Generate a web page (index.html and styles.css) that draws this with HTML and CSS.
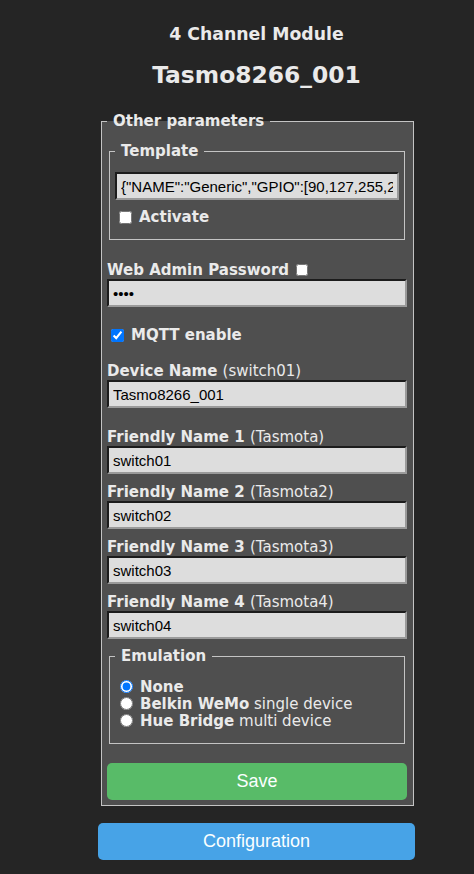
FILE: index.html
```html
<!DOCTYPE html>
<html lang="en">
<head>
<meta charset="utf-8">
<title>Tasmo8266_001 - Other parameters</title>
<link rel="stylesheet" href="styles.css">
</head>
<body>
<div class="wrap">
  <h3 class="module">4 Channel Module</h3>
  <h2 class="device">Tasmo8266_001</h2>
  <form class="form">
    <fieldset class="outer">
      <legend>Other parameters</legend>
      <fieldset class="inner tpl">
        <legend>Template</legend>
        <input class="field" type="text" value='{"NAME":"Generic","GPIO":[90,127,255,21,22,23,0,0,24,255,255,255,255],"FLAG":1,"BASE":18}'>
        <label class="check act"><input type="checkbox"><span>Activate</span></label>
      </fieldset>
      <div class="group pw">
        <label class="lbl">Web Admin Password <input type="checkbox" class="show"></label>
        <input class="field" type="password" value="1234">
      </div>
      <label class="check mqtt"><input type="checkbox" checked><span>MQTT enable</span></label>
      <div class="group dev">
        <label class="lbl">Device Name <span class="def">(switch01)</span></label>
        <input class="field" type="text" value="Tasmo8266_001">
      </div>
      <div class="group fn first">
        <label class="lbl">Friendly Name 1 <span class="def">(Tasmota)</span></label>
        <input class="field" type="text" value="switch01">
      </div>
      <div class="group fn">
        <label class="lbl">Friendly Name 2 <span class="def">(Tasmota2)</span></label>
        <input class="field" type="text" value="switch02">
      </div>
      <div class="group fn">
        <label class="lbl">Friendly Name 3 <span class="def">(Tasmota3)</span></label>
        <input class="field" type="text" value="switch03">
      </div>
      <div class="group fn">
        <label class="lbl">Friendly Name 4 <span class="def">(Tasmota4)</span></label>
        <input class="field" type="text" value="switch04">
      </div>
      <fieldset class="inner emu">
        <legend>Emulation</legend>
        <label class="radio"><input type="radio" name="emu" checked><span><b>None</b></span></label>
        <label class="radio"><input type="radio" name="emu"><span><b>Belkin WeMo</b> single device</span></label>
        <label class="radio"><input type="radio" name="emu"><span><b>Hue Bridge</b> multi device</span></label>
      </fieldset>
      <button type="button" class="btn save">Save</button>
    </fieldset>
  </form>
  <button type="button" class="btn config">Configuration</button>
</div>
</body>
</html>
```
FILE: styles.css
```css
* { box-sizing: border-box; }

body {
  margin: 0;
  background: #252525;
  color: #eaeaea;
  font-family: "DejaVu Sans", Verdana, sans-serif;
  font-size: 15px;
  line-height: 18px;
}

.wrap {
  width: 317px;
  margin-left: 98px;
  padding-top: 24px;
}

.module {
  margin: 0;
  font-size: 17.3px;
  line-height: 20px;
  font-weight: bold;
  text-align: center;
}

.device {
  margin: 17px 0 0;
  font-size: 23.4px;
  line-height: 28px;
  font-weight: bold;
  text-align: center;
}

.form { margin: 0; }

fieldset {
  min-width: 0;
  border: 1px solid #c4c4c4;
  background: #4f4f4f;
}

legend {
  padding: 0 6px;
  font-weight: bold;
  line-height: 18px;
  color: #eaeaea;
}

.outer {
  margin: 23px 1px 0 3px;
  padding: 12px 6px 5px 5px;
}

.inner {
  margin: 0 2px;
  padding: 12px 5px 13px;
}

.emu {
  margin-top: 8px;
  padding: 13px 5px 14px;
}

.field {
  display: block;
  width: 100%;
  height: 28px;
  margin: 0;
  padding: 0 4px;
  border: 2px solid;
  border-color: #1c1c1c #9a9a9a #9a9a9a #1c1c1c;
  background: #dddddd;
  color: #000;
  font-family: "Liberation Sans", Arial, sans-serif;
  font-size: 15px;
  outline: none;
}

.lbl {
  display: block;
  font-weight: bold;
  line-height: 18px;
  white-space: nowrap;
}

.def { font-weight: normal; }

.show {
  width: 12px;
  height: 12px;
  margin: 0 0 0 2px;
  vertical-align: -1px;
}

.check {
  display: flex;
  align-items: center;
  height: 18px;
  font-weight: bold;
}

.check input {
  width: 13px;
  height: 13px;
  margin: 0 7px 0 4px;
}

.act { margin-top: 8px; }

.group.pw { margin-top: 21px; }
.mqtt { margin-top: 19px; }
.group.dev { margin-top: 18px; }
.group.fn { margin-top: 9px; }
.group.fn.first { margin-top: 20px; }

.radio {
  display: flex;
  align-items: center;
  height: 17px;
  white-space: nowrap;
}

.radio input {
  width: 13px;
  height: 13px;
  margin: 0 7px 0 5px;
}

.btn {
  display: block;
  width: 100%;
  height: 37px;
  border: 0;
  border-radius: 5px;
  color: #faffff;
  font-family: "Liberation Sans", Arial, sans-serif;
  font-size: 18px;
  line-height: 37px;
  padding: 0;
}

.save {
  margin-top: 19px;
  background: #58bb68;
}

.config {
  margin-top: 17px;
  background: #47a3e7;
}
```
